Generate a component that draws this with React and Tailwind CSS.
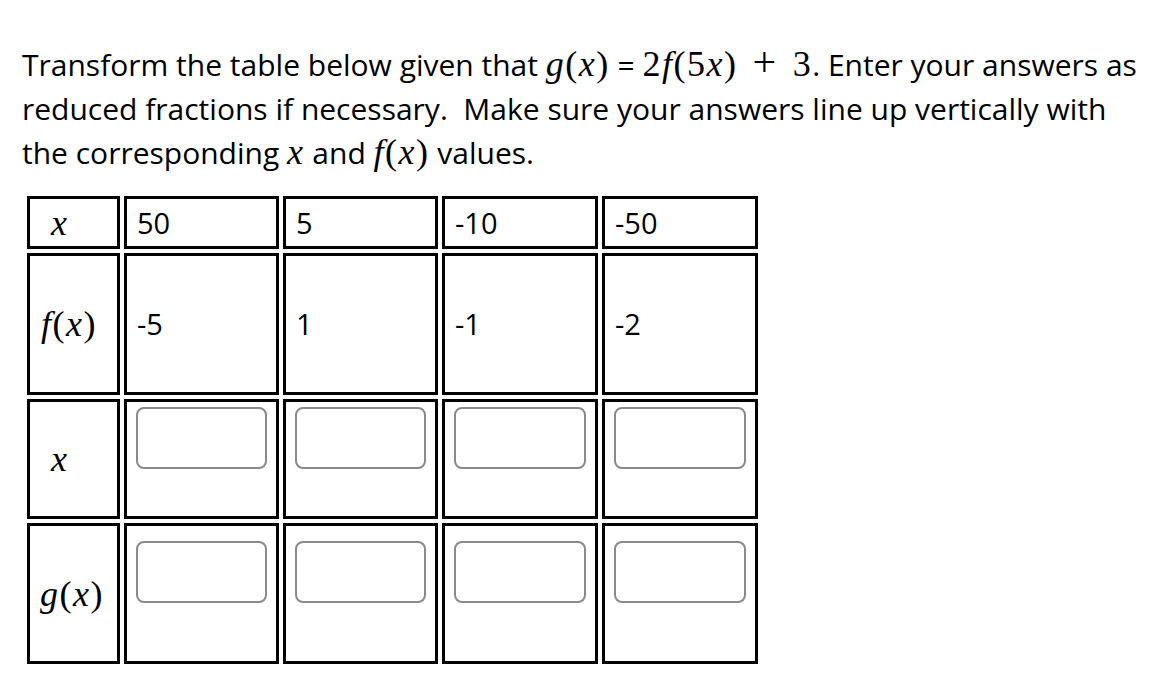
import React from "react";

const sans = { fontFamily: '"Open Sans", sans-serif' };

function V({ children }) {
  return <span className="italic">{children}</span>;
}

function M({ children, className = "" }) {
  return (
    <span
      className={"leading-none text-[36px] tracking-[1.5px] " + className}
      style={{ fontFamily: '"Liberation Serif", serif' }}
    >
      {children}
    </span>
  );
}

function Cell({ children, className = "" }) {
  return (
    <div className={"border-[3px] border-black flex items-center " + className}>
      {children}
    </div>
  );
}

function Input() {
  return <div className="mx-[9px] h-[62px] rounded-[8px] border-2 border-[#8a8a8a] bg-white" />;
}

export default function App() {
  const xs = ["50", "5", "-10", "-50"];
  const fs = ["-5", "1", "-1", "-2"];
  return (
    <div className="min-h-[686px] bg-white text-black pl-[22px] pt-[41px]" style={sans}>
      <div className="text-[30px] leading-[44px]">
        <div className="whitespace-nowrap">
          Transform the table below given that{" "}
          <M>
            <V>g</V>(<V>x</V>)
          </M>{" "}
          ={" "}
          <M>
            2<V>f</V>(5<V>x</V>)<span className="mx-[15px] text-[42px]">+</span>3
          </M>
          . Enter your answers as
        </div>
        <div className="whitespace-nowrap">
          reduced fractions if necessary.&nbsp; Make sure your answers line up vertically with
        </div>
        <div className="whitespace-nowrap">
          the corresponding{" "}
          <M>
            <V>x</V>
          </M>{" "}
          and{" "}
          <M>
            <V>f</V>(<V>x</V>)
          </M>{" "}
          values.
        </div>
      </div>

      <div className="mt-[21px] ml-[5px] grid grid-cols-[93px_155px_155px_156px_156px] grid-rows-[53px_142px_120px_141px] gap-[4px] text-[29px]">
        <Cell className="pl-[21px]">
          <M>
            <V>x</V>
          </M>
        </Cell>
        {xs.map((v) => (
          <Cell key={"x" + v} className="pl-[10px]">
            {v}
          </Cell>
        ))}

        <Cell className="pl-[11px]">
          <M>
            <V>f</V>(<V>x</V>)
          </M>
        </Cell>
        {fs.map((v) => (
          <Cell key={"f" + v} className="pl-[10px]">
            {v}
          </Cell>
        ))}

        <Cell className="pl-[21px]">
          <M>
            <V>x</V>
          </M>
        </Cell>
        {[0, 1, 2, 3].map((i) => (
          <div key={"ix" + i} className="border-[3px] border-black pt-[5px]">
            <Input />
          </div>
        ))}

        <Cell className="pl-[10px]">
          <M>
            <V>g</V>(<V>x</V>)
          </M>
        </Cell>
        {[0, 1, 2, 3].map((i) => (
          <div key={"ig" + i} className="border-[3px] border-black pt-[15px]">
            <Input />
          </div>
        ))}
      </div>
    </div>
  );
}
